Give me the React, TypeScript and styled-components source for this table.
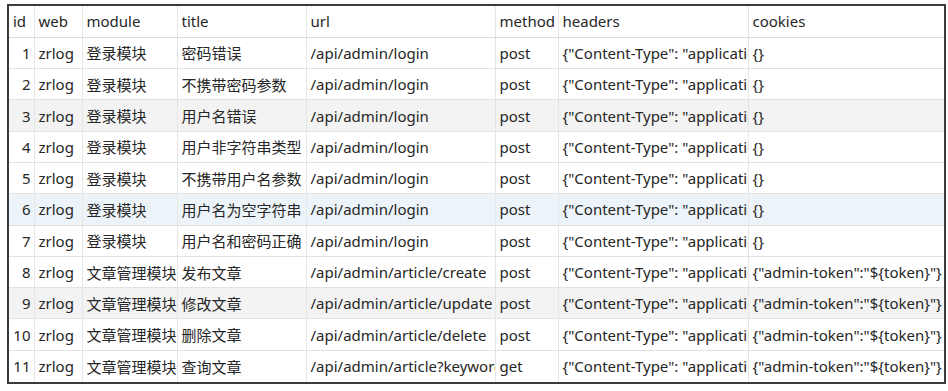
import styled, { createGlobalStyle } from 'styled-components';

type Tone = 'plain' | 'gray' | 'blue';

interface Api {
  id: number;
  module: string;
  title: string;
  url: string;
  method: string;
  cookies: string;
  tone: Tone;
}

const LOGIN = '登录模块';
const ARTICLE = '文章管理模块';
const TOKEN = '{"admin-token":"${token}"}';

const apis: Api[] = [
  { id: 1, module: LOGIN, title: '密码错误', url: '/api/admin/login', method: 'post', cookies: '{}', tone: 'plain' },
  { id: 2, module: LOGIN, title: '不携带密码参数', url: '/api/admin/login', method: 'post', cookies: '{}', tone: 'plain' },
  { id: 3, module: LOGIN, title: '用户名错误', url: '/api/admin/login', method: 'post', cookies: '{}', tone: 'gray' },
  { id: 4, module: LOGIN, title: '用户非字符串类型', url: '/api/admin/login', method: 'post', cookies: '{}', tone: 'plain' },
  { id: 5, module: LOGIN, title: '不携带用户名参数', url: '/api/admin/login', method: 'post', cookies: '{}', tone: 'plain' },
  { id: 6, module: LOGIN, title: '用户名为空字符串', url: '/api/admin/login', method: 'post', cookies: '{}', tone: 'blue' },
  { id: 7, module: LOGIN, title: '用户名和密码正确', url: '/api/admin/login', method: 'post', cookies: '{}', tone: 'plain' },
  { id: 8, module: ARTICLE, title: '发布文章', url: '/api/admin/article/create', method: 'post', cookies: TOKEN, tone: 'plain' },
  { id: 9, module: ARTICLE, title: '修改文章', url: '/api/admin/article/update', method: 'post', cookies: TOKEN, tone: 'gray' },
  { id: 10, module: ARTICLE, title: '删除文章', url: '/api/admin/article/delete', method: 'post', cookies: TOKEN, tone: 'plain' },
  { id: 11, module: ARTICLE, title: '查询文章', url: '/api/admin/article?keyword=', method: 'get', cookies: TOKEN, tone: 'plain' },
];

const columns = [
  { name: 'id', width: 25 },
  { name: 'web', width: 48 },
  { name: 'module', width: 95 },
  { name: 'title', width: 129 },
  { name: 'url', width: 189 },
  { name: 'method', width: 63 },
  { name: 'headers', width: 190 },
  { name: 'cookies', width: 196 },
];

const HEADERS = '{"Content-Type": "application/json"}';

export default function App() {
  return (
    <>
      <GlobalStyle />
      <Frame>
        <Grid>
          <colgroup>
            {columns.map((c) => (
              <col key={c.name} style={{ width: c.width }} />
            ))}
          </colgroup>
          <thead>
            <Row $tone="plain">
              {columns.map((c) => (
                <HeadCell key={c.name}>{c.name}</HeadCell>
              ))}
            </Row>
          </thead>
          <tbody>
            {apis.map((api) => (
              <Row key={api.id} $tone={api.tone}>
                <Cell $align="right">{api.id}</Cell>
                <Cell>zrlog</Cell>
                <Cell>{api.module}</Cell>
                <Cell>{api.title}</Cell>
                <Cell>{api.url}</Cell>
                <Cell>{api.method}</Cell>
                <Cell>{HEADERS}</Cell>
                <Cell>{api.cookies}</Cell>
              </Row>
            ))}
          </tbody>
        </Grid>
      </Frame>
    </>
  );
}

const GlobalStyle = createGlobalStyle`
  body {
    margin: 0;
    padding: 4px 0 0 7px;
    background: #ffffff;
    font-family: "Noto Sans", "Noto Sans CJK SC", sans-serif;
  }
`;

const Frame = styled.div`
  width: 935px;
  border: 2px solid #3b3b3b;
  background: #ffffff;
`;

const Grid = styled.table`
  width: 935px;
  table-layout: fixed;
  border-collapse: collapse;
  font-size: 15px;
  color: #262626;
`;

const toneColor: Record<Tone, string> = {
  plain: '#ffffff',
  gray: '#f3f3f3',
  blue: '#edf4f9',
};

const Row = styled.tr<{ $tone: Tone }>`
  height: 31.3px;
  background: ${(p) => toneColor[p.$tone]};

  &:last-child td {
    border-bottom: none;
  }
`;

const Cell = styled.td<{ $align?: 'left' | 'right' }>`
  padding: 0 ${(p) => (p.$align === 'right' ? '3px' : '0')} 0 4px;
  text-align: ${(p) => p.$align ?? 'left'};
  white-space: nowrap;
  overflow: hidden;
  text-overflow: clip;
  border-right: 1px solid #e6e6e6;
  border-bottom: 1px solid #e2e2e2;
  vertical-align: middle;

  &:last-child {
    border-right: none;
  }
`;

const HeadCell = styled.th`
  padding: 0 0 0 4px;
  text-align: left;
  font-weight: normal;
  white-space: nowrap;
  overflow: hidden;
  border-right: 1px solid #e6e6e6;
  border-bottom: 1px solid #dcdcdc;

  &:last-child {
    border-right: none;
  }
`;
